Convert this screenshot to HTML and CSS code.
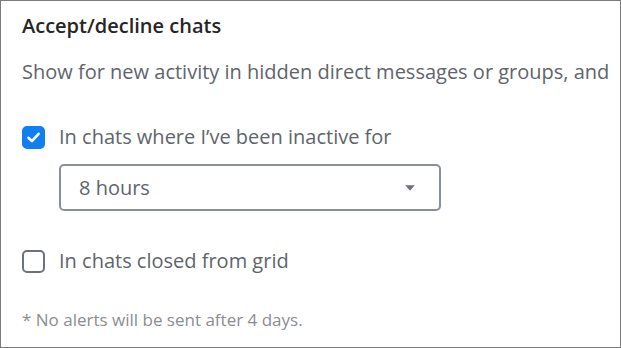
FILE: index.html
```html
<!DOCTYPE html>
<html lang="en">
<head>
    <meta charset="UTF-8">
    <meta name="viewport" content="width=device-width, initial-scale=1.0">
    <title>Accept/decline chats</title>
    <link rel="stylesheet" href="styles.css">
</head>
<body>
    <div class="panel">
        <h2 class="title">Accept/decline chats</h2>
        <p class="desc">Show for new activity in hidden direct messages or groups, and</p>

        <label class="option">
            <span class="box checked">
                <svg width="15" height="15" viewBox="0 0 15 15"><path d="M2.4 7.8 L5.9 11.1 L12.6 3.8" fill="none" stroke="#fff" stroke-width="2.6" stroke-linecap="round" stroke-linejoin="round"/></svg>
            </span>
            <span class="option-text">In chats where I’ve been inactive for</span>
        </label>

        <div class="select">
            <span class="select-value">8 hours</span>
            <svg class="caret" width="10" height="6" viewBox="0 0 10 6"><path d="M0.3 0.3 H9.7 L5 5.7 Z" fill="#6b7079"/></svg>
        </div>

        <label class="option option-second">
            <span class="box"></span>
            <span class="option-text">In chats closed from grid</span>
        </label>

        <p class="note">* No alerts will be sent after 4 days.</p>
    </div>
</body>
</html>
```
FILE: styles.css
```css
* { margin: 0; padding: 0; box-sizing: border-box; }
body { font-family: "Open Sans", sans-serif; background-color: #fff; }
.panel { width: 621px; height: 348px; border: 1px solid #7b7b7b; padding: 11px 21px; overflow: hidden; }
.title { font-size: 20px; font-weight: 600; line-height: 28px; color: #262626; }
.desc { margin-top: 18px; font-size: 20px; line-height: 28px; color: #60646b; white-space: nowrap; }
.option { display: flex; align-items: center; gap: 14px; margin-top: 37px; font-size: 20px; line-height: 28px; color: #60646b; }
.option-second { margin-top: 36px; }
.box { width: 23px; height: 23px; border: 2px solid #6e737b; border-radius: 5px; display: flex; align-items: center; justify-content: center; flex-shrink: 0; }
.box.checked { background-color: #0f7ff2; border-color: #0f7ff2; }
.select { display: flex; align-items: center; justify-content: space-between; width: 382px; height: 47px; margin: 13px 0 0 37px; padding: 0 24px 0 18px; border: 2px solid #8b9098; border-radius: 5px; font-size: 20px; color: #60646b; }
.select-value { line-height: 28px; margin-top: 1px; }
.note { margin-top: 33px; font-size: 17px; line-height: 24px; color: #8a8d92; }
```
